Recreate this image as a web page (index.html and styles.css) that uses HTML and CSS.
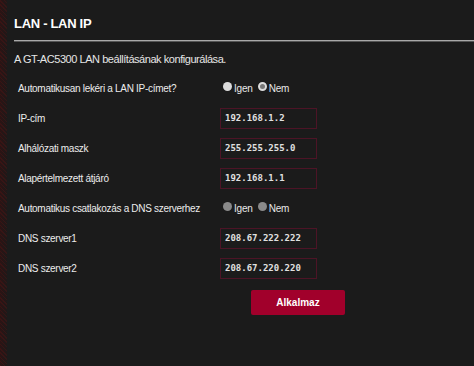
FILE: index.html
```html
<!DOCTYPE html>
<html lang="hu">
<head>
  <meta charset="UTF-8">
  <title>LAN - LAN IP</title>
  <link rel="stylesheet" href="styles.css">
</head>
<body>
  <div class="oldalsav"></div>
  <div class="tartalom">
    <h1>LAN - LAN IP</h1>
    <div class="elvalaszto"></div>
    <p class="leiras">A GT-AC5300 LAN beállításának konfigurálása.</p>

    <div class="urlap">
      <div class="sor">
        <span class="cimke">Automatikusan lekéri a LAN IP-címet?</span>
        <div class="radiok">
          <span class="radio"></span><span>Igen</span>
          <span class="radio bejelolt"></span><span>Nem</span>
        </div>
      </div>
      <div class="sor">
        <span class="cimke">IP-cím</span>
        <input class="mezo" type="text" value="192.168.1.2">
      </div>
      <div class="sor">
        <span class="cimke">Alhálózati maszk</span>
        <input class="mezo" type="text" value="255.255.255.0">
      </div>
      <div class="sor">
        <span class="cimke">Alapértelmezett átjáró</span>
        <input class="mezo" type="text" value="192.168.1.1">
      </div>
      <div class="sor">
        <span class="cimke">Automatikus csatlakozás a DNS szerverhez</span>
        <div class="radiok">
          <span class="radio tiltott"></span><span>Igen</span>
          <span class="radio tiltott"></span><span>Nem</span>
        </div>
      </div>
      <div class="sor">
        <span class="cimke">DNS szerver1</span>
        <input class="mezo" type="text" value="208.67.222.222">
      </div>
      <div class="sor">
        <span class="cimke">DNS szerver2</span>
        <input class="mezo" type="text" value="208.67.220.220">
      </div>
    </div>

    <button class="gomb">Alkalmaz</button>
  </div>
</body>
</html>
```
FILE: styles.css
```css
html, body {
  height: 100%;
}

body {
  margin: 0;
  display: flex;
  background-color: #1b1b1b;
  color: #e8e8e8;
  font-family: "Liberation Sans", Arial, sans-serif;
  overflow: hidden;
}

.oldalsav {
  width: 7px;
  flex-shrink: 0;
  background:
    repeating-linear-gradient(45deg, rgba(90, 20, 20, 0.35) 0 1px, transparent 1px 3px),
    linear-gradient(to right, #2a1414, #1f1818);
}

.tartalom {
  flex: 1;
  padding-left: 7px;
}

h1 {
  margin: 0;
  padding-top: 16px;
  height: 24px;
  font-size: 13px;
  font-weight: bold;
  letter-spacing: -0.3px;
  color: #ffffff;
}

.elvalaszto {
  height: 1px;
  background-color: #a9a9a9;
  border-bottom: 1px solid #555;
}

.leiras {
  margin: 0;
  padding-top: 11px;
  font-size: 11px;
  letter-spacing: -0.45px;
  color: #e6e6e6;
}

.urlap {
  margin-top: 8px;
  padding-left: 4px;
}

.sor {
  display: flex;
  align-items: center;
  height: 30px;
}

.cimke {
  width: 202px;
  font-size: 10px;
  letter-spacing: -0.3px;
  color: #ececec;
}

.radiok {
  display: flex;
  align-items: center;
  font-size: 10px;
  letter-spacing: -0.2px;
  margin-left: 3px;
}

.radio {
  width: 9px;
  height: 9px;
  border-radius: 50%;
  background-color: #dcdcdc;
  margin-right: 2px;
  position: relative;
  top: -2px;
}

.radio + span {
  margin-right: 5px;
}

.radio.bejelolt {
  box-sizing: border-box;
  border: 2px solid #dcdcdc;
  background-color: #777;
}

.radio.tiltott {
  background-color: #8a8a8a;
}

.mezo {
  width: 97px;
  height: 21px;
  box-sizing: border-box;
  padding: 0 4px;
  border: 1px solid #4d1426;
  background-color: #1b1b1b;
  color: #e0e0e0;
  font-family: "DejaVu Sans Mono", monospace;
  font-size: 9px;
  font-weight: bold;
  outline: none;
}

.gomb {
  display: block;
  margin: 7px 0 0 237px;
  width: 94px;
  height: 25px;
  border: none;
  border-radius: 2px;
  background-color: #a1002b;
  color: #ffffff;
  font-family: "Liberation Sans", Arial, sans-serif;
  font-size: 10px;
  font-weight: bold;
}
```
